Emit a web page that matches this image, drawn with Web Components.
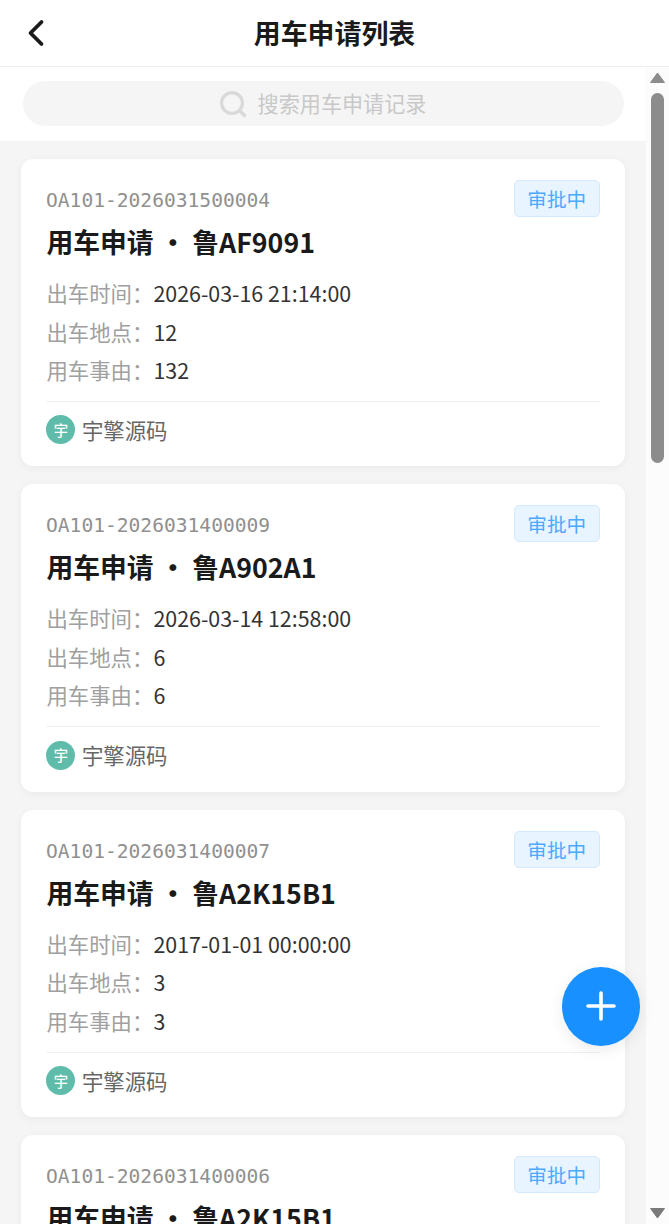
<!DOCTYPE html>
<html lang="zh">
<head>
<meta charset="utf-8">
<title>用车申请列表</title>
<style>
  html, body { margin: 0; height: 100%; overflow: hidden; background: #fff; }
  body { font-family: "Noto Sans CJK SC", "Noto Sans", sans-serif; }
</style>
</head>
<body>
<apply-page>
  <apply-card code="OA101-2026031500004" plate="鲁AF9091" time="2026-03-16 21:14:00" place="12" reason="132"></apply-card>
  <apply-card code="OA101-2026031400009" plate="鲁A902A1" time="2026-03-14 12:58:00" place="6" reason="6"></apply-card>
  <apply-card code="OA101-2026031400007" plate="鲁A2K15B1" time="2017-01-01 00:00:00" place="3" reason="3"></apply-card>
  <apply-card code="OA101-2026031400006" plate="鲁A2K15B1" time="2017-01-01 00:00:00" place="3" reason="3"></apply-card>
</apply-page>
<script>
customElements.define('nav-bar', class extends HTMLElement {
  constructor() {
    super()
    let shadow = this.attachShadow({ mode: 'open' })
    shadow.innerHTML = `<style>
    :host{
      display:grid;
      grid-template-columns:1fr auto 1fr;
      align-items:center;
      height:66px;
      background:#fff;
      border-bottom:1px solid #eeeeee;
      flex:none;
    }
    svg{
      margin-left:26px;
      display:block;
    }
    h1{
      margin:0;
      font-size:26.9px;
      line-height:36px;
      font-weight:700;
      color:#1a1a1a;
    }
    </style>
    <svg width="20" height="28" viewBox="0 0 20 28" fill="none" stroke="#1a1a1a" stroke-width="3.8" stroke-linecap="round" stroke-linejoin="round"><path d="M15.5 3 4.5 14 15.5 25"/></svg>
    <h1><slot></slot></h1>
    <span></span>`
  }
})

customElements.define('search-bar', class extends HTMLElement {
  constructor() {
    super()
    let shadow = this.attachShadow({ mode: 'open' })
    shadow.innerHTML = `<style>
    :host{
      display:block;
      flex:none;
      background:#fff;
      padding:14px 22px 15px 23px;
    }
    div{
      height:45px;
      border-radius:23px;
      background:#f5f5f5;
      display:flex;
      align-items:center;
      justify-content:center;
      gap:11px;
      padding-right:2px;
      font-size:21.1px;
      color:#c8c8c8;
    }
    span{
      position:relative;
      top:-1px;
    }
    svg{
      display:block;
    }
    </style>
    <div>
      <svg width="28" height="28" viewBox="0 0 28 28" fill="none" stroke="#d9d9d9" stroke-width="3.2" stroke-linecap="round"><circle cx="13" cy="13" r="10.4"/><path d="M21 21l4.5 4.5"/></svg>
      <span><slot></slot></span>
    </div>`
  }
})

customElements.define('apply-card', class extends HTMLElement {
  constructor() {
    super()
    let shadow = this.attachShadow({ mode: 'open' })
    let a = n => this.getAttribute(n)
    shadow.innerHTML = `<style>
    :host{
      display:block;
      flex:none;
      background:#fff;
      border-radius:12px;
      box-shadow:0 2px 8px rgba(0,0,0,.05);
      padding:21px 25px 0 25px;
      height:286.45px;
      color:#333;
    }
    .top{
      display:flex;
      justify-content:space-between;
      align-items:center;
      height:37px;
    }
    .code{
      font-family:"DejaVu Sans Mono",monospace;
      font-size:19.6px;
      color:#909090;
      margin:4px 0 0 -.4px;
    }
    .tag{
      box-sizing:border-box;
      height:37px;
      padding:0 12.5px;
      display:flex;
      align-items:center;
      border:1px solid #d4e9ff;
      border-radius:5px;
      background:#e8f4ff;
      color:#4fa8ff;
      font-size:19.6px;
    }
    h2{
      margin:5px 0 12px;
      font-size:26.76px;
      line-height:40px;
      font-weight:700;
      color:#1a1a1a;
      white-space:pre;
    }
    .row{
      font-size:21.4px;
      line-height:38.5px;
      display:flex;
      white-space:pre;
    }
    .row b{
      font-weight:400;
      color:#a0a0a0;
      width:107px;
    }
    .foot{
      margin-top:11.2px;
      border-top:1px solid #f0f0f0;
      padding-top:13px;
      display:flex;
      align-items:center;
      gap:6.5px;
      font-size:21.4px;
      line-height:30px;
      color:#666;
    }
    i{
      width:29px;
      height:29px;
      border-radius:50%;
      background:#5fbcaa;
      color:#fff;
      font-style:normal;
      font-size:14.3px;
      font-weight:500;
      display:flex;
      align-items:center;
      justify-content:center;
    }
    </style>
    <div class="top"><span class="code">${a('code')}</span><span class="tag">审批中</span></div>
    <h2>用车申请 · ${a('plate')}</h2>
    <div class="row"><b>出车时间：</b><span>${a('time')}</span></div>
    <div class="row"><b>出车地点：</b><span>${a('place')}</span></div>
    <div class="row"><b>用车事由：</b><span>${a('reason')}</span></div>
    <div class="foot"><i>宇</i><span>宇擎源码</span></div>`
  }
})

customElements.define('add-fab', class extends HTMLElement {
  constructor() {
    super()
    let shadow = this.attachShadow({ mode: 'open' })
    shadow.innerHTML = `<style>
    :host{
      position:absolute;
      left:562px;
      top:967px;
      width:78px;
      height:78.5px;
      border-radius:50%;
      background:#1890ff;
      box-shadow:0 4px 16px rgba(0,0,0,.08);
      display:flex;
      align-items:center;
      justify-content:center;
    }
    </style>
    <svg width="30" height="30" viewBox="0 0 30 30" fill="none" stroke="#fff" stroke-width="3.6" stroke-linecap="round"><path d="M15 2v26M2 15h26"/></svg>`
  }
})

customElements.define('fake-scrollbar', class extends HTMLElement {
  constructor() {
    super()
    let shadow = this.attachShadow({ mode: 'open' })
    shadow.innerHTML = `<style>
    :host{
      display:flex;
      flex-direction:column;
      align-items:center;
      flex:none;
      width:23px;
      background:#fcfcfc;
      padding:5px 0;
      box-sizing:border-box;
    }
    .thumb{
      width:13px;
      height:370px;
      margin-top:10px;
      border-radius:7px;
      background:#8c8c8c;
    }
    svg{
      display:block;
      flex:none;
    }
    .end{
      margin-top:auto;
    }
    </style>
    <svg width="15" height="11" viewBox="0 0 15 11"><path d="M7.5 1 14.5 10.5H.5z" fill="#8c8c8c" stroke="#8c8c8c" stroke-linejoin="round"/></svg>
    <div class="thumb"></div>
    <svg class="end" width="15" height="11" viewBox="0 0 15 11"><path d="M.5.5h14L7.5 10z" fill="#7a7a7a" stroke="#7a7a7a" stroke-linejoin="round"/></svg>`
  }
})

customElements.define('apply-page', class extends HTMLElement {
  constructor() {
    super()
    let shadow = this.attachShadow({ mode: 'open' })
    shadow.innerHTML = `<style>
    :host{
      display:flex;
      flex-direction:column;
      height:100vh;
      overflow:hidden;
      position:relative;
    }
    .body{
      flex:1;
      min-height:0;
      display:flex;
    }
    .main{
      flex:1;
      min-width:0;
      display:flex;
      flex-direction:column;
    }
    .list{
      flex:1;
      min-height:0;
      overflow:hidden;
      background:#f5f5f5;
      padding:18px 21.4px 0;
      display:flex;
      flex-direction:column;
      gap:18px;
    }
    </style>
    <nav-bar>用车申请列表</nav-bar>
    <div class="body">
      <div class="main">
        <search-bar>搜索用车申请记录</search-bar>
        <div class="list"><slot></slot></div>
      </div>
      <fake-scrollbar></fake-scrollbar>
    </div>
    <add-fab></add-fab>`
  }
})
</script>
</body>
</html>
